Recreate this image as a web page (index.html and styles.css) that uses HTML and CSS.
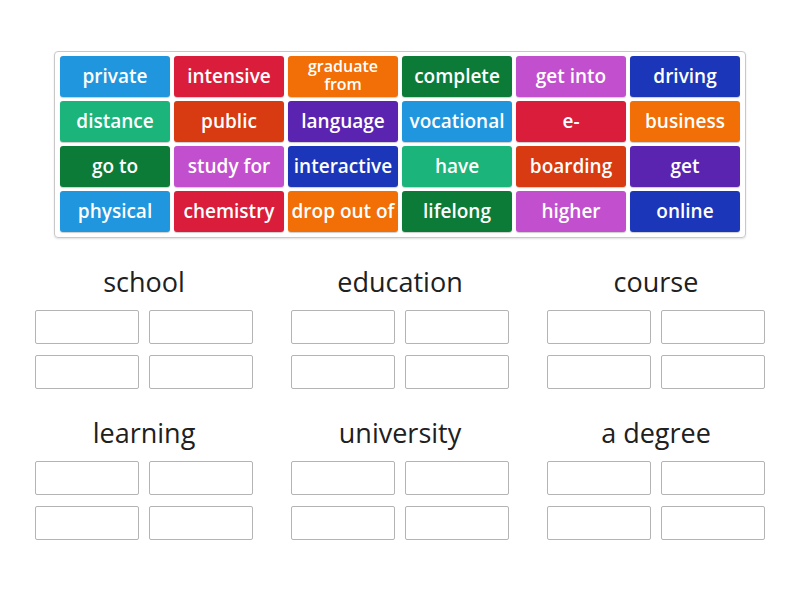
FILE: index.html
```html
<!DOCTYPE html>
<html>
<head>
<meta charset="utf-8">
<link rel="stylesheet" href="styles.css">
</head>
<body>
<div class="page">
  <div class="bank">
    <div class="tile c-blue">private</div>
    <div class="tile c-red">intensive</div>
    <div class="tile c-orange small"><span>graduate</span><span>from</span></div>
    <div class="tile c-green">complete</div>
    <div class="tile c-magenta">get into</div>
    <div class="tile c-navy">driving</div>

    <div class="tile c-teal">distance</div>
    <div class="tile c-rust">public</div>
    <div class="tile c-purple">language</div>
    <div class="tile c-blue">vocational</div>
    <div class="tile c-red">e-</div>
    <div class="tile c-orange">business</div>

    <div class="tile c-green">go to</div>
    <div class="tile c-magenta">study for</div>
    <div class="tile c-navy">interactive</div>
    <div class="tile c-teal">have</div>
    <div class="tile c-rust">boarding</div>
    <div class="tile c-purple">get</div>

    <div class="tile c-blue">physical</div>
    <div class="tile c-red">chemistry</div>
    <div class="tile c-orange">drop out of</div>
    <div class="tile c-green">lifelong</div>
    <div class="tile c-magenta">higher</div>
    <div class="tile c-navy">online</div>
  </div>

  <div class="groups">
    <div class="group">
      <div class="title">school</div>
      <div class="slots"><div class="slot"></div><div class="slot"></div><div class="slot"></div><div class="slot"></div></div>
    </div>
    <div class="group">
      <div class="title">education</div>
      <div class="slots"><div class="slot"></div><div class="slot"></div><div class="slot"></div><div class="slot"></div></div>
    </div>
    <div class="group">
      <div class="title">course</div>
      <div class="slots"><div class="slot"></div><div class="slot"></div><div class="slot"></div><div class="slot"></div></div>
    </div>
    <div class="group">
      <div class="title">learning</div>
      <div class="slots"><div class="slot"></div><div class="slot"></div><div class="slot"></div><div class="slot"></div></div>
    </div>
    <div class="group">
      <div class="title">university</div>
      <div class="slots"><div class="slot"></div><div class="slot"></div><div class="slot"></div><div class="slot"></div></div>
    </div>
    <div class="group">
      <div class="title">a degree</div>
      <div class="slots"><div class="slot"></div><div class="slot"></div><div class="slot"></div><div class="slot"></div></div>
    </div>
  </div>
</div>
</body>
</html>
```

FILE: styles.css
```css
html, body {
  margin: 0;
  padding: 0;
  background: #ffffff;
}

body {
  font-family: "Open Sans", "Liberation Sans", sans-serif;
}

.page {
  width: 800px;
  height: 600px;
  display: flex;
  flex-direction: column;
  align-items: center;
  padding-top: 51px;
  box-sizing: border-box;
}

.bank {
  display: grid;
  grid-template-columns: repeat(6, 110px);
  grid-auto-rows: 41px;
  gap: 4px 4px;
  padding: 4px 5px 5px 5px;
  border: 1px solid #c8c8c8;
  border-radius: 4px;
  box-shadow: 0 1px 2px rgba(0,0,0,0.12);
}

.tile {
  display: flex;
  align-items: center;
  justify-content: center;
  text-align: center;
  color: #ffffff;
  font-weight: 600;
  font-size: 19px;
  line-height: 22px;
  padding-bottom: 2px;
  box-sizing: border-box;
  border-radius: 3px;
  white-space: nowrap;
  box-shadow: 0 1px 1px rgba(0,0,0,0.2);
}

.tile.small {
  flex-direction: column;
  font-size: 16px;
  line-height: 18px;
  font-weight: 600;
  padding-bottom: 3px;
}

.tile.small span {
  display: block;
  height: 18px;
  line-height: 18px;
}

.c-blue { background: #1f96dd; }
.c-red { background: #d91d3b; }
.c-orange { background: #f26e06; }
.c-green { background: #0c7b38; }
.c-magenta { background: #c24fcd; }
.c-navy { background: #1b36b8; }
.c-teal { background: #1bb47b; }
.c-rust { background: #d83a12; }
.c-purple { background: #5a24b0; }

.groups {
  margin-top: 26px;
  display: grid;
  grid-template-columns: repeat(3, 218px);
  column-gap: 38px;
  row-gap: 26px;
}

.group {
  display: flex;
  flex-direction: column;
}

.title {
  text-align: center;
  font-size: 27px;
  line-height: 36px;
  color: #202020;
  margin-bottom: 10px;
}

.slots {
  display: grid;
  grid-template-columns: 104px 104px;
  grid-auto-rows: 34px;
  column-gap: 10px;
  row-gap: 11px;
}

.slot {
  border: 1px solid #b4b4b4;
  border-radius: 2px;
  background: #ffffff;
}
```
